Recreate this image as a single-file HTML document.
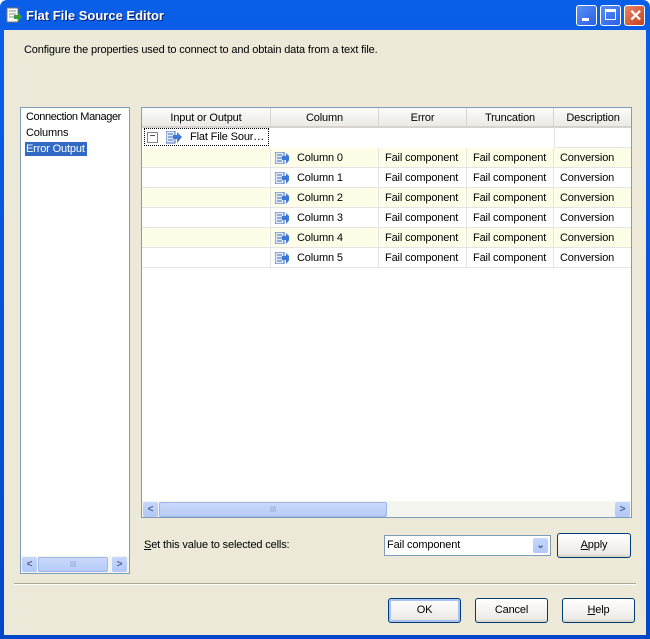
<html><head><style>
body{margin:0;width:650px;height:639px;overflow:hidden;font-family:Tahoma,"Liberation Sans",sans-serif;font-size:11px;letter-spacing:-0.15px;}
.win{position:absolute;left:0;top:0;width:650px;height:639px;background:linear-gradient(#0a5ee8,#0653d8 50%,#0048c8);border-radius:7px 7px 0 0;}
.title{position:absolute;left:26px;top:8px;color:#fff;font-weight:bold;font-size:13px;text-shadow:1px 1px #0a1e6e;letter-spacing:0;}
.body{position:absolute;left:4px;top:30px;width:642px;height:605px;background:#ECE9D8;}
.a{position:absolute;}
.tb{position:absolute;top:5px;width:21px;height:21px;border:1px solid #fff;border-radius:3px;background:linear-gradient(135deg,#5b8ff7,#2660e6);box-sizing:border-box;}
.btn{position:absolute;border:1px solid #003c74;border-radius:3px;background:linear-gradient(#fff,#ECEBE6 85%,#d6d0c5);text-align:center;box-sizing:border-box;line-height:22px;}
.grid{position:absolute;left:141px;top:107px;width:491px;height:411px;background:#fff;border:1px solid #7f9db9;box-sizing:border-box;overflow:hidden;}
.hd{position:absolute;top:0;height:20px;line-height:20px;text-align:center;background:linear-gradient(#fbfbf9,#ebeae4);border-right:1px solid #d6d3ce;border-bottom:2px solid #d6d3ce;box-sizing:border-box;}
.c{position:absolute;height:20px;line-height:20px;border-right:1px solid #e5e5e5;border-bottom:1px solid #e5e5e5;box-sizing:border-box;padding-left:6px;white-space:nowrap;overflow:hidden;}
.ic{display:inline-block;width:14px;height:12px;vertical-align:middle;margin-right:8px;}
.sb{position:absolute;background:#f5f5f0;}
.arr{position:absolute;width:15px;height:15px;background:linear-gradient(#c6d6fb,#b2c8f8);border-radius:2px;color:#4d6185;font-size:10px;text-align:center;line-height:15px;font-weight:bold;}
.thumb{position:absolute;background:linear-gradient(#cad9fb,#b6cbf7);border:1px solid #9fb6ea;border-radius:2px;box-sizing:border-box;color:#8aa0d0;text-align:center;font-size:8px;line-height:13px;}
</style></head><body>
<div class="win">
<svg class="a" style="left:6px;top:7px" width="16" height="17"><rect x="1" y="1" width="11" height="14" fill="#fff" stroke="#777"/><path d="M3 4h7M3 7h7M3 10h5" stroke="#888"/><path d="M8 8h4v-3l4 5-4 5v-3H8z" fill="#3a9a3a"/></svg>
<div class="title">Flat File Source Editor</div>
<div class="tb" style="left:576px"><div class="a" style="left:5px;top:12px;width:7px;height:3px;background:#fff"></div></div>
<div class="tb" style="left:600px"><div class="a" style="left:4px;top:3px;width:11px;height:11px;border:1px solid #fff;border-top:3px solid #fff;box-sizing:border-box"></div></div>
<div class="tb" style="left:624px;background:linear-gradient(135deg,#e8866a,#c8401c)"><div class="a" style="left:4px;top:0;color:#fff;font-size:16px;font-weight:bold;font-family:'Liberation Sans'">✕</div></div>
<div class="body"></div>
<div class="a" style="left:24px;top:44px">Configure the properties used to connect to and obtain data from a text file.</div>

<div class="a" style="left:20px;top:107px;width:110px;height:467px;background:#fff;border:1px solid #7f9db9;box-sizing:border-box">
<div class="a" style="left:5px;top:3px;white-space:nowrap;letter-spacing:-0.4px">Connection Manager</div>
<div class="a" style="left:5px;top:19px">Columns</div>
<div class="a" style="left:4px;top:34px;background:#316ac5;color:#fff;padding:1px 2px 1px 1px">Error Output</div>
<div class="sb" style="left:0;top:448px;width:108px;height:17px"></div>
<div class="arr" style="left:1px;top:449px">&lt;</div>
<div class="thumb" style="left:17px;top:449px;width:70px;height:15px">III</div>
<div class="arr" style="left:91px;top:449px">&gt;</div>
</div>

<div class="grid">
<div class="hd" style="left:0;width:129px">Input or Output</div>
<div class="hd" style="left:129px;width:108px">Column</div>
<div class="hd" style="left:237px;width:88px">Error</div>
<div class="hd" style="left:325px;width:87px">Truncation</div>
<div class="hd" style="left:412px;width:79px">Description</div>
<div class="a" style="left:0;top:19px;width:129px;height:20px">
<div class="a" style="left:2px;top:1px;width:125px;height:18px;border:1px dotted #000;box-sizing:border-box"></div>
<div class="a" style="left:5px;top:5px;width:9px;height:9px;border:1px solid #848484;line-height:7px;text-align:center;font-size:10px">−</div>
<svg class="a" style="left:24px;top:4px" width="16" height="13"><rect x="0" y="0" width="9" height="12" fill="#dfe8f8" stroke="#4a6fb5"/><path d="M2 3h5M2 6h5M2 9h5" stroke="#4a6fb5"/><path d="M7 4h4V1l5 5-5 6V8H7z" fill="#3b78d8"/></svg>
<div class="a" style="left:48px;top:4px">Flat File Sour…</div>
</div>
<div class="a" style="left:412px;top:19px;width:79px;height:20px;border-bottom:1px solid #e5e5e5;border-left:1px solid #e5e5e5"></div>
<div id="rows"></div>
<div class="sb" style="left:0;top:393px;width:489px;height:16px"></div>
<div class="arr" style="left:1px;top:394px">&lt;</div>
<div class="thumb" style="left:17px;top:394px;width:228px;height:15px">III</div>
<div class="arr" style="left:473px;top:394px">&gt;</div>
</div>
<script>
var h='';for(var i=0;i<6;i++){var t=40+i*20,bg=i%2?'#fff':'#fdfde8';
h+='<div class="c" style="left:0;top:'+t+'px;width:129px;background:'+bg+'"></div>'+
'<div class="c" style="left:129px;top:'+t+'px;width:108px;background:'+bg+';padding-left:4px"><svg class="ic" width="16" height="13"><rect x="0" y="0" width="9" height="12" fill="#dfe8f8" stroke="#4a6fb5"/><path d="M2 3h5M2 6h5M2 9h5" stroke="#4a6fb5"/><path d="M7 4h4V1l5 5-5 6V8H7z" fill="#3b78d8"/></svg>Column '+i+'</div>'+
'<div class="c" style="left:237px;top:'+t+'px;width:88px;background:'+bg+'">Fail component</div>'+
'<div class="c" style="left:325px;top:'+t+'px;width:87px;background:'+bg+'">Fail component</div>'+
'<div class="c" style="left:412px;top:'+t+'px;width:79px;background:'+bg+'">Conversion</div>';}
document.getElementById('rows').innerHTML=h;
</script>

<div class="a" style="left:144px;top:539px"><u>S</u>et this value to selected cells:</div>
<div class="a" style="left:384px;top:535px;width:167px;height:21px;background:#fff;border:1px solid #7f9db9;box-sizing:border-box">
<div class="a" style="left:2px;top:3px">Fail component</div>
<div class="arr" style="left:148px;top:2px;height:15px">⌄</div></div>
<div class="btn" style="left:557px;top:533px;width:74px;height:25px"><u>A</u>pply</div>
<div class="a" style="left:14px;top:583px;width:622px;height:1px;background:#aca899;border-bottom:1px solid #fff"></div>
<div class="btn" style="left:388px;top:598px;width:73px;height:25px;box-shadow:inset 0 0 0 2px #a9c2f2">OK</div>
<div class="btn" style="left:475px;top:598px;width:73px;height:25px">Cancel</div>
<div class="btn" style="left:562px;top:598px;width:73px;height:25px"><u>H</u>elp</div>
</div>
</body></html>
